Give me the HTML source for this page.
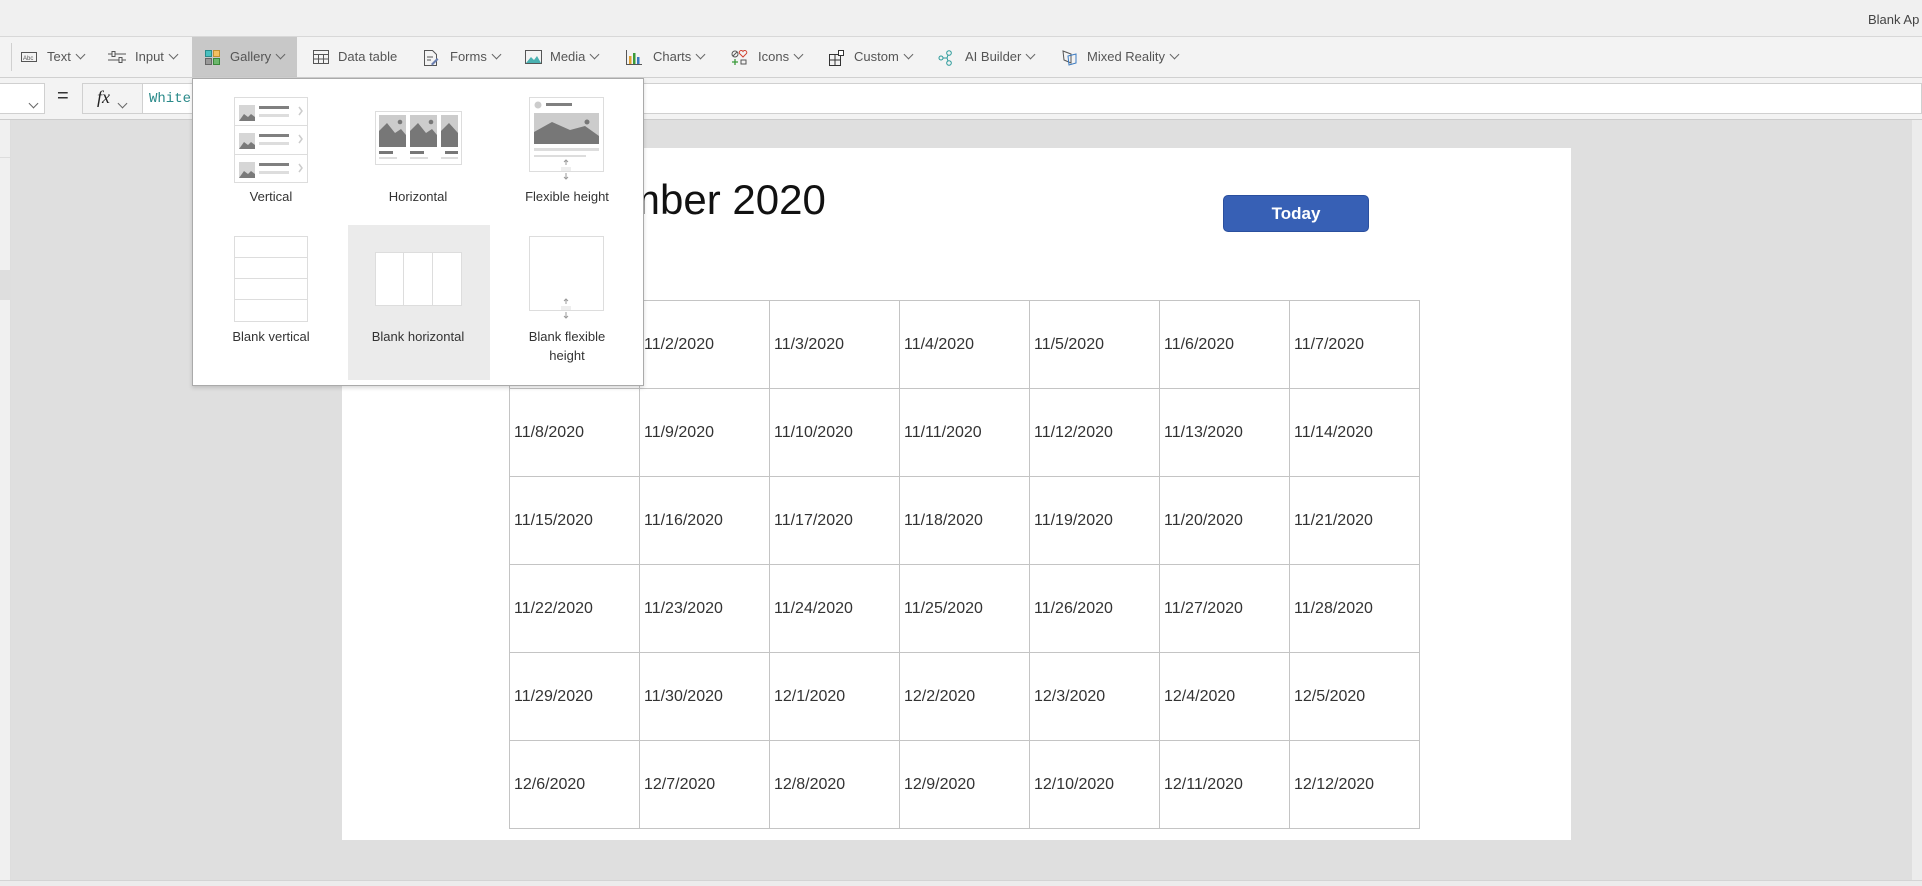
<!DOCTYPE html>
<html><head><meta charset="utf-8"><style>
*{margin:0;padding:0;box-sizing:border-box}
body{width:1922px;height:886px;overflow:hidden;background:#dfdfdf;font-family:"Liberation Sans","DejaVu Sans",sans-serif;position:relative}
.abs{position:absolute}
#top{left:0;top:0;width:1922px;height:37px;background:#f0f0f0;border-bottom:1px solid #d8d8d8}
#tb{left:0;top:37px;width:1922px;height:41px;background:#f3f3f3;border-bottom:1px solid #d0d0d0}
.ti{position:absolute;top:0;height:40px;line-height:40px;font-size:13px;color:#555;white-space:nowrap}
.ic{position:absolute;top:13px}
.chev{display:inline-block;width:7px;height:7px;border-right:1px solid #666;border-bottom:1px solid #666;transform:rotate(45deg);margin-left:6px;position:relative;top:-3px}
#fb{left:0;top:78px;width:1922px;height:42px;background:#f3f3f3;border-bottom:1px solid #ccc}
.cell{position:absolute;border:1px solid #c4c4c4;background:#fff;font-size:16px;color:#333;padding-left:4px;display:flex;align-items:center}
.lbl{position:absolute;font-size:13px;color:#333;text-align:center;width:140px;line-height:19px}
</style></head><body>
<div class="abs" id="top"><div class="abs" style="left:1868px;top:12px;font-size:13px;color:#444">Blank Ap</div></div>
<div class="abs" id="tb">
<div class="abs" style="left:11px;top:6px;width:1px;height:28px;background:#d0d0d0"></div>
<div class="abs" style="left:192px;top:0;width:105px;height:40px;background:#c8c8c8"></div>
<svg class="ic" style="left:21px" width="16" height="14"><rect x="0.5" y="2.5" width="15" height="9" fill="none" stroke="#555"/><text x="2" y="10" font-size="6" fill="#555">Abc</text></svg>
<div class="ti" style="left:47px">Text<span class="chev"></span></div>
<svg class="ic" style="left:108px" width="18" height="14"><path d="M0 4h18M0 10h18" stroke="#555"/><rect x="4" y="1.5" width="3" height="5" fill="#f3f3f3" stroke="#555"/><rect x="11" y="7.5" width="3" height="5" fill="#f3f3f3" stroke="#555"/></svg>
<div class="ti" style="left:135px">Input<span class="chev"></span></div>
<svg class="ic" style="left:205px" width="16" height="16"><rect x="0.5" y="0.5" width="6" height="6" fill="#49c0c0" stroke="#2a8a8a"/><rect x="8.5" y="0.5" width="6" height="6" fill="#f5c060" stroke="#c09030"/><rect x="0.5" y="8.5" width="6" height="6" fill="#999" stroke="#666"/><rect x="8.5" y="8.5" width="6" height="6" fill="#6cb86c" stroke="#3a883a"/></svg>
<div class="ti" style="left:230px">Gallery<span class="chev"></span></div>
<svg class="ic" style="left:313px" width="16" height="14"><rect x="0.5" y="0.5" width="15" height="13" fill="none" stroke="#555"/><path d="M0.5 4.5h15M0.5 9h15M5.5 4.5v9M10.5 4.5v9" stroke="#555"/></svg>
<div class="ti" style="left:338px">Data table</div>
<svg class="ic" style="left:423px" width="16" height="16"><path d="M1.5 0.5h8l4 4v11h-12z" fill="none" stroke="#555"/><path d="M4 7h6M4 10h4" stroke="#555"/><path d="M8 14l6-6 1.5 1.5-6 6z" fill="#6a7fb0"/></svg>
<div class="ti" style="left:450px">Forms<span class="chev"></span></div>
<svg class="ic" style="left:525px" width="17" height="14"><rect x="0.5" y="0.5" width="16" height="13" fill="none" stroke="#555"/><path d="M1 13l5-6 3 3 3-4 4 7z" fill="#49b0b0"/></svg>
<div class="ti" style="left:550px">Media<span class="chev"></span></div>
<svg class="ic" style="left:626px" width="16" height="15"><path d="M0.5 0v14.5H16" stroke="#555" fill="none"/><rect x="3" y="6" width="2.5" height="8" fill="#e0a030"/><rect x="7" y="3" width="2.5" height="11" fill="#3a9a3a"/><rect x="11" y="7" width="2.5" height="7" fill="#3a7ac0"/></svg>
<div class="ti" style="left:653px">Charts<span class="chev"></span></div>
<svg class="ic" style="left:731px" width="18" height="16"><circle cx="4" cy="4" r="3" fill="none" stroke="#555"/><path d="M2 6l4-4" stroke="#555"/><path d="M12 7l-3.5-3.5a2 2 0 013.5-2 2 2 0 013.5 2z" fill="none" stroke="#d04030"/><path d="M4 9v6M1 12h6" stroke="#3a9a3a" stroke-width="1.3"/><path d="M10 10h5v4h-5z" fill="none" stroke="#555"/></svg>
<div class="ti" style="left:758px">Icons<span class="chev"></span></div>
<svg class="ic" style="left:829px" width="16" height="16"><rect x="0.5" y="4.5" width="11" height="11" fill="none" stroke="#333"/><path d="M6 4.5v11M0.5 10h11" stroke="#333"/><rect x="9.5" y="0.5" width="5" height="5" fill="#fff" stroke="#333"/></svg>
<div class="ti" style="left:854px">Custom<span class="chev"></span></div>
<svg class="ic" style="left:938px" width="16" height="16"><circle cx="3" cy="8" r="2" fill="none" stroke="#2a9a9a"/><circle cx="11" cy="3" r="2.3" fill="none" stroke="#2a9a9a"/><circle cx="11" cy="13" r="2.3" fill="none" stroke="#2a9a9a"/><path d="M5 8h4M10 5l-1 3 1 3" stroke="#2a9a9a" fill="none"/></svg>
<div class="ti" style="left:965px">AI Builder<span class="chev"></span></div>
<svg class="ic" style="left:1062px" width="16" height="16"><path d="M1 1l8 3v9l-7-3z" fill="none" stroke="#555"/><path d="M6 6l8-2v9l-7 2z" fill="none" stroke="#3a7ac0"/></svg>
<div class="ti" style="left:1087px">Mixed Reality<span class="chev"></span></div>
</div>
<div class="abs" id="fb">
<div class="abs" style="left:0;top:5px;width:45px;height:31px;background:#fff;border:1px solid #d0d0d0;border-left:none"><span class="chev abs" style="left:30px;top:10px;margin:0"></span></div>
<div class="abs" style="left:57px;top:7px;font-size:20px;color:#333">=</div>
<div class="abs" style="left:82px;top:5px;width:61px;height:31px;background:#f3f3f3;border:1px solid #d0d0d0"><span class="abs" style="left:14px;top:3px;font-family:'Liberation Serif',serif;font-style:italic;font-size:18px;color:#222">fx</span><span class="chev abs" style="left:36px;top:10px;margin:0"></span></div>
<div class="abs" style="left:142px;top:5px;width:1780px;height:31px;background:#fff;border:1px solid #d0d0d0"><span class="abs" style="left:6px;top:7px;font-family:'Liberation Mono',monospace;font-size:14px;color:#2a8a8a">White</span></div>
</div>
<div class="abs" style="left:0;top:120px;width:11px;height:766px;background:#f0f0f0;border-right:1px solid #ddd"></div>
<div class="abs" style="left:0;top:157px;width:11px;height:1px;background:#ddd"></div>
<div class="abs" style="left:0;top:270px;width:11px;height:30px;background:#dedede"></div>
<div class="abs" style="left:1912px;top:120px;width:10px;height:766px;background:#ececec"></div>
<div class="abs" style="left:0;top:880px;width:1922px;height:6px;background:#ececec;border-top:1px solid #d4d4d4"></div>
<div class="abs" style="left:342px;top:148px;width:1229px;height:692px;background:#fff"></div>
<div class="abs" style="left:527px;top:176px;font-size:42px;color:#111;white-space:nowrap">November 2020</div>
<div class="abs" style="left:1223px;top:195px;width:146px;height:37px;background:#3760b5;border:1px solid #2a4f9e;border-radius:5px;color:#fff;font-weight:bold;font-size:17px;text-align:center;line-height:35px">Today</div>
<div id="cal"></div>
<script>
var d=["11/1/2020","11/2/2020","11/3/2020","11/4/2020","11/5/2020","11/6/2020","11/7/2020","11/8/2020","11/9/2020","11/10/2020","11/11/2020","11/12/2020","11/13/2020","11/14/2020","11/15/2020","11/16/2020","11/17/2020","11/18/2020","11/19/2020","11/20/2020","11/21/2020","11/22/2020","11/23/2020","11/24/2020","11/25/2020","11/26/2020","11/27/2020","11/28/2020","11/29/2020","11/30/2020","12/1/2020","12/2/2020","12/3/2020","12/4/2020","12/5/2020","12/6/2020","12/7/2020","12/8/2020","12/9/2020","12/10/2020","12/11/2020","12/12/2020"];
var h="";for(var i=0;i<42;i++){var c=i%7,r=Math.floor(i/7);h+='<div class="cell" style="left:'+(509+c*130)+'px;top:'+(300+r*88)+'px;width:'+(c==6?131:132)+'px;height:89px">'+d[i]+'</div>';}
document.getElementById("cal").innerHTML=h;
</script>
<div class="abs" style="left:192px;top:78px;width:452px;height:308px;background:#fff;border:1px solid #aaa;box-shadow:0 2px 4px rgba(0,0,0,.15)">
<div class="abs" style="left:155px;top:146px;width:142px;height:155px;background:#ebebeb"></div>
<svg class="abs" style="left:41px;top:18px" width="74" height="86"><g fill="none" stroke="#ddd"><rect x="0.5" y="0.5" width="73" height="85"/><path d="M0.5 28.5h73M0.5 57.5h73"/></g>
<g id="row"><rect x="5" y="8" width="16" height="16" fill="#999" opacity=".4"/><path d="M5 24l5-7 4 3 3-3 4 3v4z" fill="#7a7a7a"/><rect x="25" y="9" width="30" height="3" fill="#808080"/><rect x="25" y="17" width="30" height="3" fill="#ddd"/><path d="M65 10l3 4-3 4" stroke="#ccc" fill="none" stroke-width="1.5"/></g>
<use href="#row" y="28"/><use href="#row" y="57"/></svg>
<div class="lbl" style="left:8px;top:108px">Vertical</div>
<svg class="abs" style="left:182px;top:32px" width="87" height="54"><rect x="0.5" y="0.5" width="86" height="53" fill="#fff" stroke="#ddd"/><g fill="#ccc"><rect x="4" y="4" width="27" height="32"/><rect x="35" y="4" width="27" height="32"/><rect x="66" y="4" width="17" height="32"/></g><g fill="#777"><path d="M4 36v-16l8-8 8 10 6-4 5 6v12z"/><path d="M35 36v-16l8-8 8 10 6-4 5 6v12z"/><path d="M66 36v-16l8-8 9 10v14z"/><circle cx="25" cy="11" r="2.3"/><circle cx="56" cy="11" r="2.3"/><rect x="4" y="40" width="14" height="3"/><rect x="35" y="40" width="14" height="3"/><rect x="70" y="40" width="13" height="3"/></g><g fill="#ddd"><rect x="4" y="46" width="18" height="2"/><rect x="35" y="46" width="18" height="2"/><rect x="66" y="46" width="17" height="2"/></g></svg>
<div class="lbl" style="left:155px;top:108px">Horizontal</div>
<svg class="abs" style="left:336px;top:18px" width="76" height="86"><rect x="0.5" y="0.5" width="74" height="74" fill="#fff" stroke="#ddd"/><circle cx="9" cy="8" r="3.5" fill="#ccc"/><rect x="17" y="6" width="26" height="3" fill="#808080"/><rect x="5" y="16" width="65" height="31" fill="#ccc"/><path d="M5 47v-12l18-10 18 8 15-4 14 10v8z" fill="#777"/><circle cx="58" cy="25" r="2.5" fill="#777"/><rect x="5" y="51" width="65" height="3" fill="#ddd"/><rect x="5" y="58" width="52" height="2" fill="#ddd"/><path d="M37 68v-5M35 65l2-2 2 2M37 76v6M35 80l2 2 2-2" stroke="#999" fill="none"/><path d="M32 71h10M32 73h10" stroke="#ddd"/></svg>
<div class="lbl" style="left:304px;top:108px">Flexible height</div>
<svg class="abs" style="left:41px;top:157px" width="74" height="86"><g fill="none" stroke="#ddd"><rect x="0.5" y="0.5" width="73" height="85"/><path d="M0.5 21.5h73M0.5 42.5h73M0.5 63.5h73"/></g></svg>
<div class="lbl" style="left:8px;top:248px">Blank vertical</div>
<svg class="abs" style="left:182px;top:173px" width="87" height="54"><g fill="#fff" stroke="#ddd"><rect x="0.5" y="0.5" width="86" height="53"/><path d="M28.5 0.5v53M57.5 0.5v53"/></g></svg>
<div class="lbl" style="left:155px;top:248px">Blank horizontal</div>
<svg class="abs" style="left:336px;top:157px" width="76" height="86"><rect x="0.5" y="0.5" width="74" height="74" fill="#fff" stroke="#ddd"/><path d="M37 68v-5M35 65l2-2 2 2M37 76v6M35 80l2 2 2-2" stroke="#999" fill="none"/><path d="M32 71h10M32 73h10" stroke="#ddd"/></svg>
<div class="lbl" style="left:304px;top:248px">Blank flexible<br>height</div>
</div>
</body></html>
